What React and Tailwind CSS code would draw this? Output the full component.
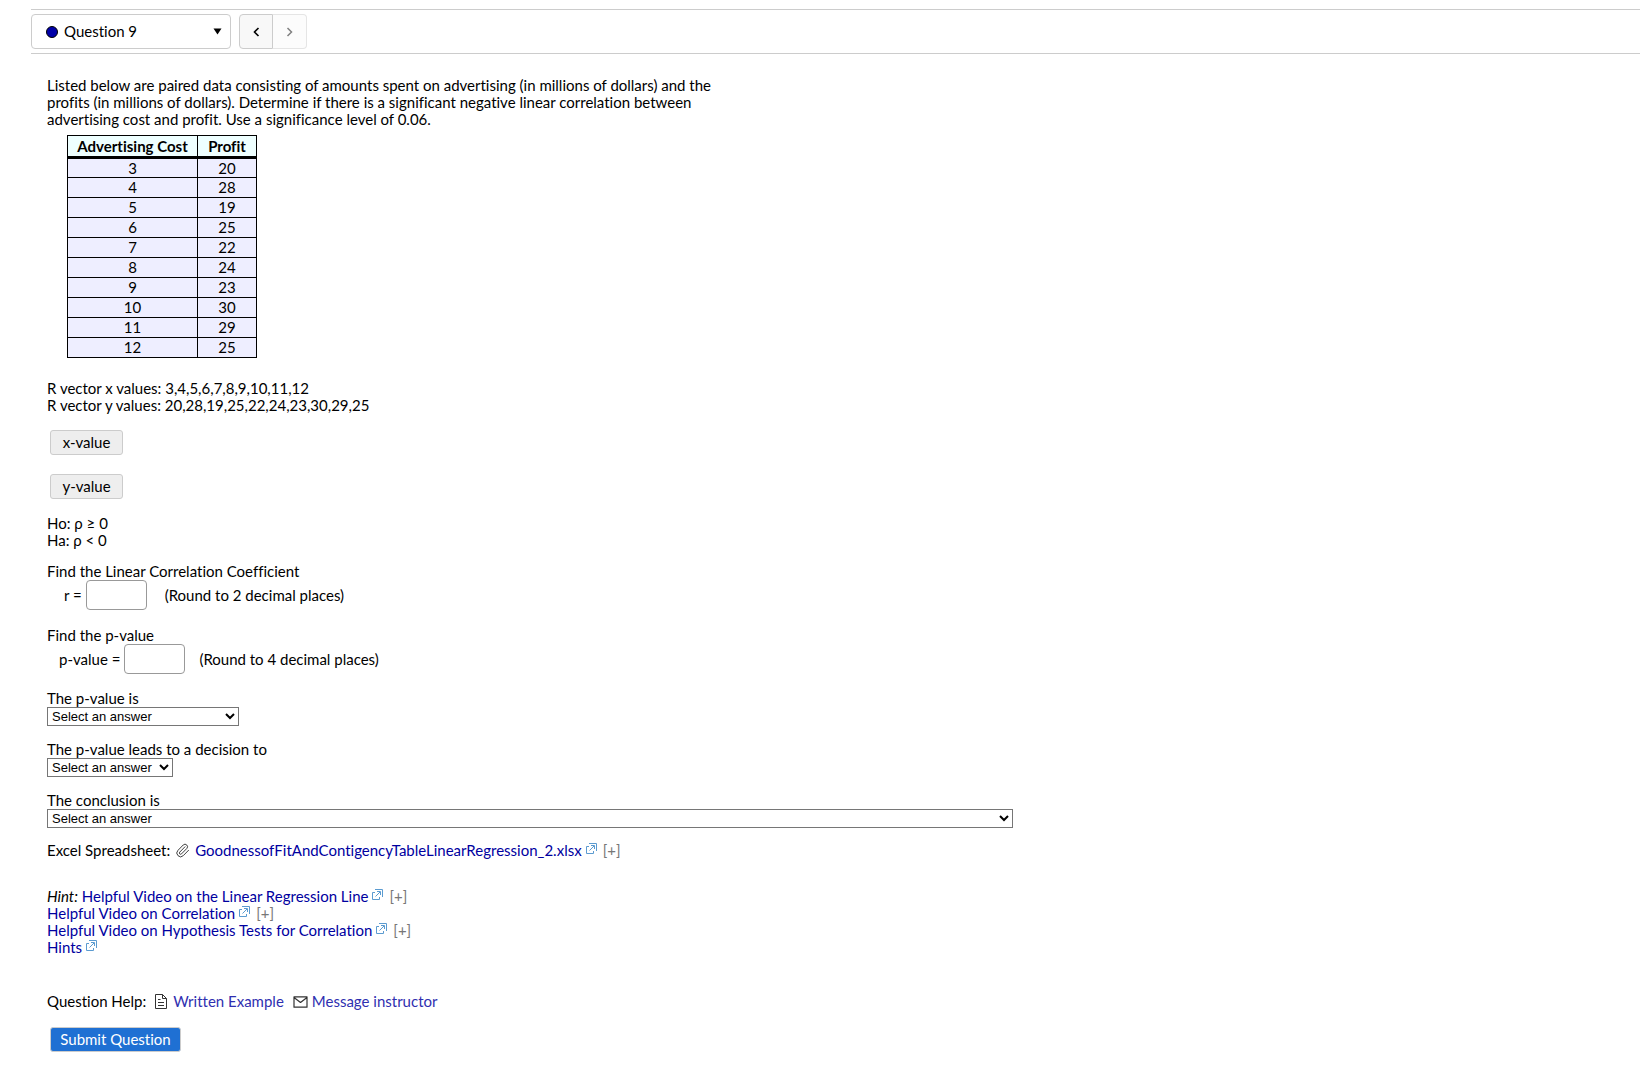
import { useState } from 'react';
import { Paperclip } from 'lucide-react';

const rows = [
    [3, 20], [4, 28], [5, 19], [6, 25], [7, 22],
    [8, 24], [9, 23], [10, 30], [11, 29], [12, 25],
];

function ExternalIcon() {
    return (
        <svg className="inline-block align-[2px] ml-1 w-[11px] h-[11px]" viewBox="0 0 11 11" fill="none" stroke="#5b9bd0" aria-hidden="true">
            <path d="M3 3.500H.5v7h7V8" />
            <path d="M3 .5h7.500V8" />
            <path d="M3.500 7.500L8 3M5 2.500h3.500V6" />
        </svg>
    );
}

function ExtLink({ children, preview = true }) {
    return (
        <>
            <a href="#" className="text-[#0000a0]">{children}<ExternalIcon /></a>
            {preview && <button type="button" className="ml-1.5 text-[#777]">[+]</button>}
        </>
    );
}

function AnswerSelect({ id, label, className }) {
    return (
        <div>
            <label htmlFor={id} className="block">{label}</label>
            <select id={id}
                className={`block h-[19px] appearance-auto bg-white border border-[#767676] font-['Liberation_Sans',sans-serif] text-[13px] leading-[15px] ${className}`}>
                <option>Select an answer</option>
            </select>
        </div>
    );
}

export default function App() {
    const [open, setOpen] = useState(false);

    return (
        <main className="bg-white text-black font-[Lato,sans-serif] [font-variant-ligatures:none] text-[15px] leading-[17px] pt-[9px] pl-[31px] pb-10">
            {/* Question navigation */}
            <nav className="flex items-center gap-2 border-y border-[#ccc] py-1">
                <button type="button" onClick={() => setOpen(!open)} aria-expanded={open}
                    className="flex items-center w-[200px] h-[35px] pl-[14px] pr-2 border border-[#ccc] rounded">
                    <svg className="w-3 h-3 mr-1.5" viewBox="0 0 12 12" aria-hidden="true">
                        <circle cx="6" cy="6" r="5.500" fill="#0000a8" stroke="#000" />
                    </svg>
                    <span>Question 9</span>
                    <svg className="ml-auto w-[9px] h-[7px]" viewBox="0 0 9 7" aria-hidden="true">
                        <path d="M.5 .5h8L4.500 6.500z" />
                    </svg>
                </button>
                <div className="flex">
                    <button type="button" aria-label="Previous question"
                        className="flex items-center justify-center w-[34px] h-[35px] bg-[#f8f8f8] border border-[#ccc] rounded-l">
                        <svg className="w-[7px] h-[10px]" viewBox="0 0 7 10" fill="none" stroke="#000" strokeWidth="1.600" aria-hidden="true">
                            <path d="M5.500 1L1.500 5l4 4" />
                        </svg>
                    </button>
                    <button type="button" disabled aria-label="Next question"
                        className="flex items-center justify-center w-[34px] h-[35px] bg-[#fcfcfc] border border-l-0 border-[#e5e5e5] rounded-r">
                        <svg className="w-[7px] h-[10px]" viewBox="0 0 7 10" fill="none" stroke="#808080" strokeWidth="1.500" aria-hidden="true">
                            <path d="M1.500 1l4 4-4 4" />
                        </svg>
                    </button>
                </div>
            </nav>

            <div className="pl-4 pt-[23px]">
                <p>
                    Listed below are paired data consisting of amounts spent on advertising (in millions of dollars) and the<br />
                    profits (in millions of dollars). Determine if there is a significant negative linear correlation between<br />
                    advertising cost and profit. Use a significance level of 0.06.
                </p>

                <table className="ml-5 mt-[7px] border-collapse text-center">
                    <thead>
                        <tr className="h-[22px] bg-[#eeffff]">
                            <th className="w-[130px] border border-b-3 border-black p-0">Advertising Cost</th>
                            <th className="w-[59px] border border-b-3 border-black p-0">Profit</th>
                        </tr>
                    </thead>
                    <tbody>
                        {rows.map(([cost, profit]) => (
                            <tr key={cost} className="h-5 bg-[#eeeeff]">
                                <td className="border border-black p-0">{cost}</td>
                                <td className="border border-black p-0">{profit}</td>
                            </tr>
                        ))}
                    </tbody>
                </table>

                <p className="mt-[22px]">
                    R vector x values: 3,4,5,6,7,8,9,10,11,12<br />
                    R vector y values: 20,28,19,25,22,24,23,30,29,25
                </p>

                <div className="flex flex-col items-start gap-[19px] mt-4 ml-[3px]">
                    <button type="button" className="w-[73px] h-[25px] bg-[#eee] border border-[#ccc] rounded-[3px]">x-value</button>
                    <button type="button" className="w-[73px] h-[25px] bg-[#eee] border border-[#ccc] rounded-[3px]">y-value</button>
                </div>

                <p className="mt-4">
                    Ho: ρ ≥ 0<br />
                    Ha: ρ &lt; 0
                </p>

                <p className="mt-[14px]">Find the Linear Correlation Coefficient</p>
                <div className="flex items-center pl-[17px]">
                    <label htmlFor="r">r =</label>
                    <input id="r" type="text" className="w-[61px] h-[30px] ml-1 mr-[18px] px-1 border border-[#999] rounded" />
                    <span>(Round to 2 decimal places)</span>
                </div>

                <p className="mt-[17px]">Find the p-value</p>
                <div className="flex items-center pl-3">
                    <label htmlFor="p">p-value =</label>
                    <input id="p" type="text" className="w-[61px] h-[30px] ml-1 mr-[14px] px-1 border border-[#999] rounded" />
                    <span>(Round to 4 decimal places)</span>
                </div>

                <div className="flex flex-col gap-[15px] mt-4">
                    <AnswerSelect id="comparison" label="The p-value is" className="w-[192px]" />
                    <AnswerSelect id="decision" label="The p-value leads to a decision to" className="w-[126px]" />
                    <AnswerSelect id="conclusion" label="The conclusion is" className="w-[966px]" />
                </div>

                <p className="mt-[14px]">
                    Excel Spreadsheet:
                    <Paperclip className="inline-block align-[-2px] mx-[5px] w-[15px] h-[15px] text-[#333]" strokeWidth={1.5} aria-hidden="true" />
                    <ExtLink>GoodnessofFitAndContigencyTableLinearRegression_2.xlsx</ExtLink>
                </p>

                <div className="mt-[29px]">
                    <p><em>Hint:</em> <ExtLink>Helpful Video on the Linear Regression Line</ExtLink></p>
                    <p><ExtLink>Helpful Video on Correlation</ExtLink></p>
                    <p><ExtLink>Helpful Video on Hypothesis Tests for Correlation</ExtLink></p>
                    <p><ExtLink preview={false}>Hints</ExtLink></p>
                </div>

                {/* Help links */}
                <div className="flex items-center mt-[37px]">
                    <span>Question Help:</span>
                    <a href="#" className="flex items-center ml-[9px] text-[#2f2fb0]">
                        <svg className="w-3 h-[15px] mr-1.5" viewBox="0 0 12 15" fill="none" stroke="#333" strokeLinejoin="round" aria-hidden="true">
                            <path d="M.5 .5h7l4 4v10H.5zM7.500 .5v4h4M3 5.500h2.500M3 8.500h6M3 11.500h6" />
                        </svg>
                        Written Example
                    </a>
                    <a href="#" className="flex items-center ml-[9px] text-[#2f2fb0]">
                        <svg className="w-[15px] h-3 mr-1" viewBox="0 0 15 12" fill="none" stroke="#333" strokeWidth="1.200" strokeLinejoin="round" aria-hidden="true">
                            <path d="M1 .8h13v10.400H1zM1 1.500l6.500 5 6.500-5" />
                        </svg>
                        Message instructor
                    </a>
                </div>

                <button type="button" className="block mt-[17px] ml-[3px] w-[131px] h-[25px] bg-[#1f70d3] text-white border border-[#ccc] rounded-[3px]">
                    Submit Question
                </button>
            </div>
        </main>
    );
}
